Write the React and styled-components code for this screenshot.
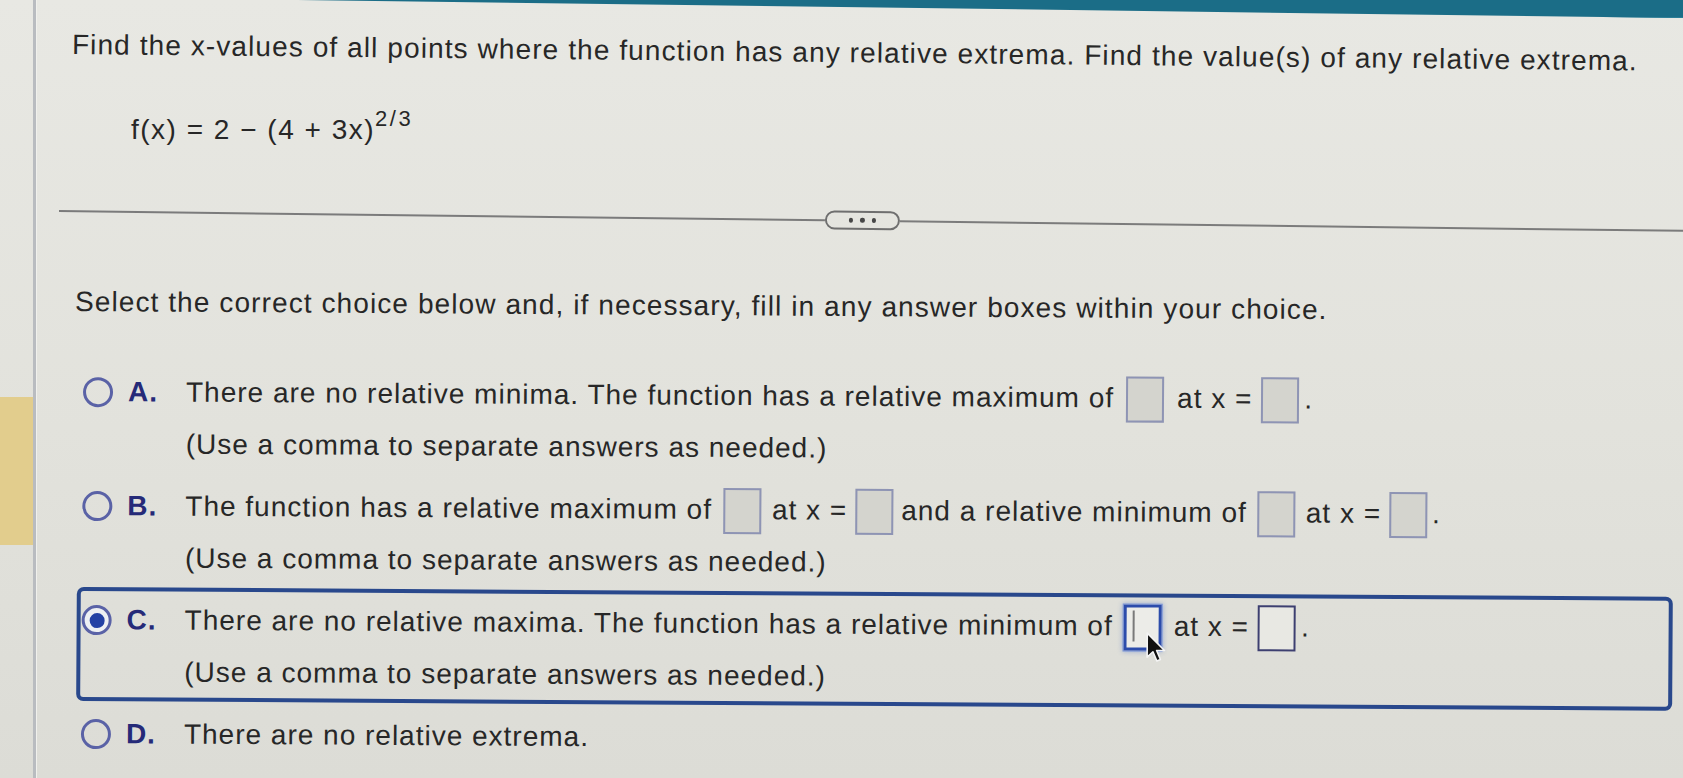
import React from 'react'
import styled, { createGlobalStyle } from 'styled-components'

const GlobalStyle = createGlobalStyle`
  html, body {
    margin: 0;
    padding: 0;
  }
  body {
    background: #e2e2dc;
    font-family: "Liberation Sans", Arial, sans-serif;
    color: #272727;
  }
`

const Screen = styled.div`
  width: 1683px;
  height: 778px;
  overflow: hidden;
  display: flex;
  background: linear-gradient(180deg, #e8e8e3 0%, #e2e2dc 55%, #dcdcd6 100%);
`

const Rail = styled.div`
  flex: 0 0 33px;
  padding-top: 397px;
  border-right: 3px solid #b9bcc0;
  box-shadow: 1px 0 0 #f0f0ec;
`

const Tab = styled.div`
  height: 148px;
  background: #e2cd8d;
`

const Main = styled.div`
  flex: 1;
  min-width: 0;
  display: flex;
  flex-direction: column;
`

const TopBar = styled.div`
  flex: none;
  height: 18px;
  background: #1b6d87;
  clip-path: polygon(262px 0, 100% 0, 100% 100%);
  box-shadow: inset 0 -1px 0 #2a7e98;
`

const Content = styled.div`
  padding-left: 23px;
  display: flex;
  flex-direction: column;
  align-items: flex-start;
`

const Tilted = styled.div`
  transform: rotate(${p => p.$tilt}deg);
  transform-origin: 0 50%;
`

const Prompt = styled(Tilted)`
  margin: 10px 0 0 13px;
  font-size: 28px;
  line-height: 34px;
  letter-spacing: 1.1px;
  white-space: nowrap;
`

const Formula = styled.div`
  margin: 48px 0 0 72px;
  font-size: 28px;
  line-height: 40px;
  letter-spacing: 1.5px;
  white-space: nowrap;
`

const Sup = styled.span`
  font-size: 22px;
  line-height: 0;
  vertical-align: 13px;
  letter-spacing: 2.5px;
`

const Divider = styled(Tilted)`
  align-self: stretch;
  margin: 51px -20px 0 0;
  height: 19px;
  display: flex;
  align-items: center;
`

const RuleLine = styled.div`
  height: 2px;
  background: #7b7b7b;
  flex: ${p => (p.$width ? `0 0 ${p.$width}px` : '1')};
`

const MoreButton = styled.div`
  flex: none;
  box-sizing: border-box;
  width: 75px;
  height: 19px;
  border: 2px solid #6f6f6f;
  border-radius: 10px;
  display: flex;
  align-items: center;
  justify-content: center;
  gap: 7px;
`

const Dot = styled.span`
  width: 4.5px;
  height: 4.5px;
  border-radius: 50%;
  background: #474747;
`

const Instruction = styled(Tilted)`
  margin: 65px 0 0 16px;
  font-size: 28px;
  line-height: 34px;
  letter-spacing: 1.1px;
  white-space: nowrap;
`

const Choices = styled(Tilted)`
  align-self: stretch;
  margin: 40px 10px 0 18px;
  display: flex;
  flex-direction: column;
`

const Choice = styled.div`
  display: grid;
  grid-template-columns: 45px 58px 1fr;
  border: 4px solid ${p => (p.$selected ? '#29488c' : 'transparent')};
  border-radius: 7px;
  padding: 2px 0 0 1px;
`

const Radio = styled.span`
  margin-top: 12px;
  box-sizing: border-box;
  width: 30px;
  height: 30px;
  border: 3px solid #5a62a6;
  border-radius: 50%;
  display: grid;
  place-items: center;
  background: ${p => (p.$checked ? '#eef0f3' : 'transparent')};

  &::after {
    content: '';
    display: ${p => (p.$checked ? 'block' : 'none')};
    width: 15px;
    height: 15px;
    border-radius: 50%;
    background: #2441a4;
  }
`

const Letter = styled.span`
  font-size: 28px;
  font-weight: 700;
  line-height: 54px;
  letter-spacing: 1px;
  color: #252a78;
`

const Body = styled.div`
  font-size: 28px;
  letter-spacing: 1px;
  white-space: nowrap;
`

const Statement = styled.div`
  height: 54px;
  line-height: 54px;
`

const Hint = styled.div`
  line-height: 50px;
`

const boxLooks = {
  idle: 'background: #d4d4ce; border: 2px solid #8e94b4;',
  active: 'background: #e8e8e3; border: 2px solid #3d3f70;',
  focus:
    'background: #ececE8; border: 3px solid #2c4cab; box-shadow: 0 0 0 1px #7d97d8, 0 0 5px 1px rgba(60, 100, 200, 0.45);',
}

const Blank = styled.span`
  position: relative;
  display: inline-block;
  box-sizing: border-box;
  width: 38px;
  height: 46px;
  vertical-align: -15px;
  margin: 0 ${p => p.$after}px 0 ${p => p.$before}px;
  ${p => boxLooks[p.$look || 'idle']}
`

const Caret = styled.span`
  position: absolute;
  left: 6px;
  top: 3px;
  bottom: 6px;
  width: 2px;
  background: #7a7a7a;
`

const Pointer = styled.svg`
  position: absolute;
  left: 19px;
  top: 24px;
  width: 21px;
  height: 32px;
`

const MouseCursor = () => (
  <Pointer viewBox="0 0 13 20">
    <path
      d="M1 1 L1 16 L4.6 12.6 L7.1 18.4 L9.3 17.4 L6.9 11.8 L11.8 11.8 Z"
      fill="#111"
      stroke="#f4f4f4"
      strokeWidth="1"
      strokeLinejoin="round"
    />
  </Pointer>
)

const App = () => {
  return (
    <>
      <GlobalStyle />
      <Screen>
        <Rail>
          <Tab />
        </Rail>
        <Main>
          <TopBar />
          <Content>
            <Prompt $tilt={0.6}>
              Find the x-values of all points where the function has any relative extrema. Find the value(s) of any relative extrema.
            </Prompt>
            <Formula>
              f(x) = 2 − (4 + 3x)<Sup>2/3</Sup>
            </Formula>
            <Divider $tilt={0.7}>
              <RuleLine $width={766} />
              <MoreButton>
                <Dot />
                <Dot />
                <Dot />
              </MoreButton>
              <RuleLine />
            </Divider>
            <Instruction $tilt={0.37}>
              Select the correct choice below and, if necessary, fill in any answer boxes within your choice.
            </Instruction>
            <Choices $tilt={0.35}>
              <Choice>
                <Radio />
                <Letter>A.</Letter>
                <Body>
                  <Statement>
                    There are no relative minima. The function has a relative maximum of
                    <Blank $before={12} $after={13} />
                    at x =<Blank $before={9} $after={5} />.
                  </Statement>
                  <Hint>(Use a comma to separate answers as needed.)</Hint>
                </Body>
              </Choice>
              <Choice>
                <Radio />
                <Letter>B.</Letter>
                <Body>
                  <Statement>
                    The function has a relative maximum of
                    <Blank $before={11} $after={11} />
                    at x =<Blank $before={8} $after={8} />
                    and a relative minimum of
                    <Blank $before={10} $after={11} />
                    at x =<Blank $before={8} $after={5} />.
                  </Statement>
                  <Hint>(Use a comma to separate answers as needed.)</Hint>
                </Body>
              </Choice>
              <Choice $selected>
                <Radio $checked />
                <Letter>C.</Letter>
                <Body>
                  <Statement>
                    There are no relative maxima. The function has a relative minimum of
                    <Blank $look="focus" $before={11} $after={12}>
                      <Caret />
                      <MouseCursor />
                    </Blank>
                    at x =<Blank $look="active" $before={9} $after={5} />.
                  </Statement>
                  <Hint>(Use a comma to separate answers as needed.)</Hint>
                </Body>
              </Choice>
              <Choice>
                <Radio />
                <Letter>D.</Letter>
                <Body>
                  <Statement>There are no relative extrema.</Statement>
                </Body>
              </Choice>
            </Choices>
          </Content>
        </Main>
      </Screen>
    </>
  )
}

export default App
